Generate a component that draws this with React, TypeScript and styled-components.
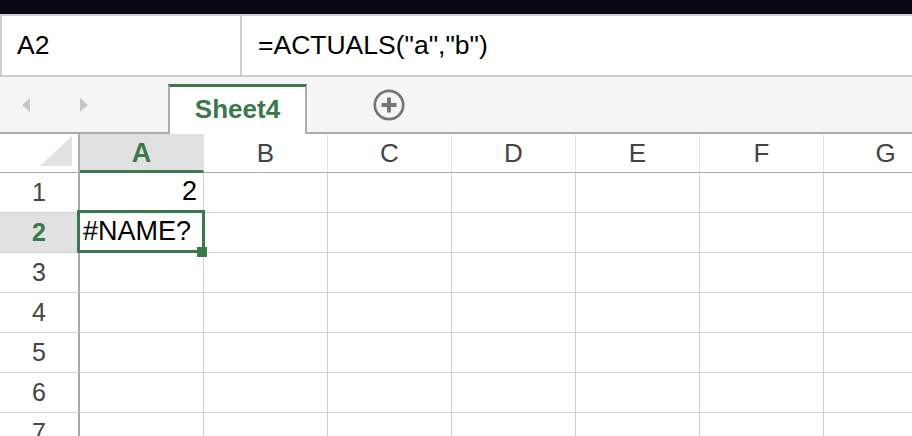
import styled, { createGlobalStyle } from 'styled-components'

const GREEN = '#3b784c'
const COLUMNS = ['A', 'B', 'C', 'D', 'E', 'F', 'G']
const ROWS = [1, 2, 3, 4, 5, 6, 7]
const VALUES: Record<string, { text: string; align: 'left' | 'right' }> = {
  A1: { text: '2', align: 'right' },
  A2: { text: '#NAME?', align: 'left' }
}
const SELECTED = { col: 'A', row: 2 }

const GlobalStyle = createGlobalStyle`
  html, body {
    margin: 0;
    padding: 0;
    background: #ffffff;
  }
  body {
    font-family: "Liberation Sans", Arial, sans-serif;
  }
`

function App () {
  return (
    <Page>
      <GlobalStyle />
      <TopBar />

      <FormulaBar>
        <NameBox>A2</NameBox>
        <FormulaInput>=ACTUALS("a","b")</FormulaInput>
      </FormulaBar>

      <TabBar>
        <NavArrows>
          <svg width="8" height="14" viewBox="0 0 8 14">
            <polygon points="8,0 8,14 0,7" fill="#c6c6c6" />
          </svg>
          <svg width="8" height="14" viewBox="0 0 8 14">
            <polygon points="0,0 0,14 8,7" fill="#c6c6c6" />
          </svg>
        </NavArrows>
        <Tab>Sheet4</Tab>
        <AddSheet>
          <svg width="32" height="32" viewBox="0 0 32 32">
            <circle cx="16" cy="16" r="14.2" fill="none" stroke="#767676" strokeWidth="2.7" />
            <line x1="8.5" y1="16" x2="23.5" y2="16" stroke="#767676" strokeWidth="4" />
            <line x1="16" y1="8.5" x2="16" y2="23.5" stroke="#767676" strokeWidth="4" />
          </svg>
        </AddSheet>
      </TabBar>

      <Grid>
        <Corner>
          <svg width="32" height="30" viewBox="0 0 32 30">
            <polygon points="32,0 32,30 0,30" fill="#e2e2e2" />
          </svg>
        </Corner>
        {COLUMNS.map(col => (
          <ColHeader key={col} $active={col === SELECTED.col}>{col}</ColHeader>
        ))}

        {ROWS.map(row => (
          <Row key={row}>
            <RowHeader $active={row === SELECTED.row}>{row}</RowHeader>
            {COLUMNS.map(col => {
              const value = VALUES[col + row]
              const selected = col === SELECTED.col && row === SELECTED.row
              return (
                <Cell key={col} $align={value ? value.align : 'left'}>
                  {value ? value.text : ''}
                  {selected && (
                    <>
                      <Selection />
                      <FillHandle />
                    </>
                  )}
                </Cell>
              )
            })}
          </Row>
        ))}
      </Grid>
    </Page>
  )
}

const Page = styled.div`
  width: 912px;
  height: 436px;
  overflow: hidden;
  display: flex;
  flex-direction: column;
  background: #ffffff;
`

const TopBar = styled.div`
  height: 14px;
  flex-shrink: 0;
  background: #0a0813;
`

const FormulaBar = styled.div`
  height: 59px;
  flex-shrink: 0;
  display: flex;
  border-top: 2px solid #cfcfcf;
  border-bottom: 2px solid #cfcfcf;
  border-left: 2px solid #cfcfcf;
  font-size: 26.5px;
  color: #000000;
`

const NameBox = styled.div`
  width: 223px;
  padding-left: 15px;
  display: flex;
  align-items: center;
  border-right: 2px solid #cfcfcf;
`

const FormulaInput = styled.div`
  flex: 1;
  padding-left: 16px;
  display: flex;
  align-items: center;
  white-space: nowrap;
`

const TabBar = styled.div`
  height: 55px;
  flex-shrink: 0;
  display: flex;
  align-items: stretch;
  background: #f5f5f5;
  border-bottom: 2px solid #acacac;
`

const NavArrows = styled.div`
  width: 146px;
  padding-left: 22px;
  display: flex;
  align-items: center;
  gap: 50px;
`

const Tab = styled.div`
  position: relative;
  z-index: 1;
  width: 135px;
  margin-top: 7px;
  margin-bottom: -2px;
  display: flex;
  align-items: center;
  justify-content: center;
  background: #ffffff;
  border-top: 3px solid ${GREEN};
  border-left: 2px solid #acacac;
  border-right: 2px solid #acacac;
  color: ${GREEN};
  font-size: 26px;
  font-weight: 700;
  padding-bottom: 2px;
`

const AddSheet = styled.div`
  margin-left: 66px;
  display: flex;
  align-items: center;
  padding-top: 1px;
`

const Grid = styled.div`
  display: grid;
  grid-template-columns: 80px repeat(7, 124px);
  grid-template-rows: 39px;
  grid-auto-rows: 40px;
  font-size: 25px;
`

const Row = styled.div`
  display: contents;
`

const Corner = styled.div`
  display: flex;
  align-items: flex-end;
  justify-content: flex-end;
  padding: 0 6px 6px 0;
  border-bottom: 1px solid #acacac;
  border-right: 2px solid #acacac;
`

const ColHeader = styled.div<{ $active: boolean }>`
  display: flex;
  align-items: center;
  justify-content: center;
  background: ${p => (p.$active ? '#e1e1e1' : '#ffffff')};
  color: ${p => (p.$active ? GREEN : '#444444')};
  font-weight: ${p => (p.$active ? 700 : 400)};
  font-size: ${p => (p.$active ? '27px' : '26px')};
  border-right: 1px solid #e3e3e3;
  border-bottom: ${p => (p.$active ? `3px solid ${GREEN}` : '1px solid #acacac')};
  padding-top: ${p => (p.$active ? '2px' : '0')};
`

const RowHeader = styled.div<{ $active: boolean }>`
  display: flex;
  align-items: center;
  justify-content: center;
  background: ${p => (p.$active ? '#e1e1e1' : '#ffffff')};
  color: ${p => (p.$active ? GREEN : '#444444')};
  font-weight: ${p => (p.$active ? 700 : 400)};
  border-right: 2px solid #a8a8a8;
  border-bottom: 1px solid #d3d3d3;
`

const Cell = styled.div<{ $align: 'left' | 'right' }>`
  position: relative;
  display: flex;
  align-items: center;
  justify-content: ${p => (p.$align === 'right' ? 'flex-end' : 'flex-start')};
  padding: 0 6px 2px 3px;
  border-right: 1px solid #d0d0d0;
  border-bottom: 1px solid #d0d0d0;
  font-size: 27px;
  color: #000000;
  white-space: nowrap;
`

const Selection = styled.div`
  position: absolute;
  z-index: 2;
  left: -3px;
  top: -3px;
  right: -2px;
  bottom: -1px;
  border: 3px solid ${GREEN};
  pointer-events: none;
`

const FillHandle = styled.div`
  position: absolute;
  z-index: 3;
  right: -4px;
  bottom: -5px;
  width: 10px;
  height: 10px;
  background: ${GREEN};
`

export default App
